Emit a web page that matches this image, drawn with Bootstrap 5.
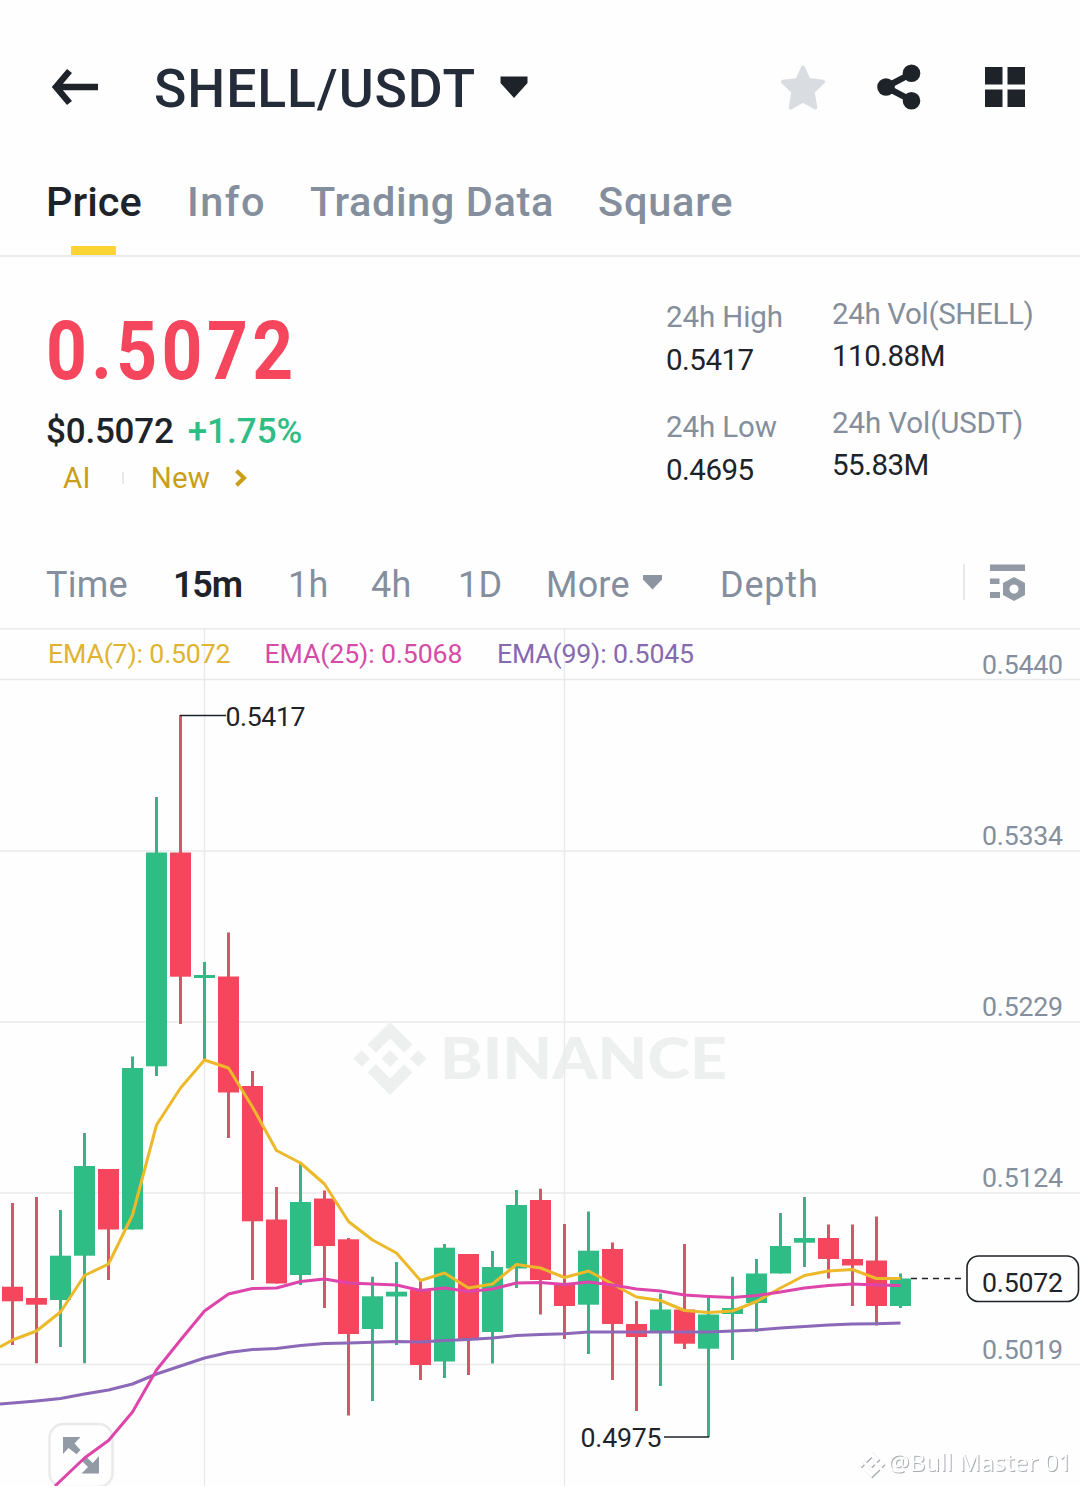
<!DOCTYPE html>
<html lang="en">
<head>
<meta charset="utf-8">
<meta name="viewport" content="width=device-width, initial-scale=1">
<title>SHELL/USDT</title>
<link href="https://cdn.jsdelivr.net/npm/bootstrap@5.3.0/dist/css/bootstrap.min.css" rel="stylesheet">
<style>
  :root { --ink:#1e2329; --muted:#848e9c; --up:#2ebd85; --down:#f6465d; --hair:#eaebec; }
  body { font-family: Roboto, "Liberation Sans", sans-serif; color:var(--ink); background:#fefefe; width:1080px; height:1486px; overflow:hidden; }
  svg { display:block; flex:none; }
  .topbar { height:144px; padding:29px 55px 0 52px; }
  .pair { font-size:53.5px; font-weight:500; line-height:64px; letter-spacing:.9px; color:#242c3a; margin-left:56px; padding-top:4px; width:346px; white-space:nowrap; }
  .tabs { height:113px; padding-left:46px; border-bottom:2px solid var(--hair); }
  .tabs .nav-link { padding:0; font-size:41.5px; line-height:60px; height:60px; margin-top:28px; color:var(--muted); position:relative; white-space:nowrap; font-weight:500; }
  .tabs .nav-link.active { color:var(--ink); }
  .tabs .nav-link.active::after { content:""; position:absolute; left:25px; top:74px; width:45px; height:9px; background:#fcd535; border-radius:1px; }
  .t-price { width:141px; letter-spacing:0 }
  .t-info { width:123px; letter-spacing:1.5px }
  .t-data { width:288px; letter-spacing:.6px }
  .t-square { letter-spacing:.8px }
  .summary { height:283px; padding:46px 0 0 46px; }
  .last-price { font-size:82px; font-weight:700; line-height:96px; color:var(--down); letter-spacing:5px; width:min-content; transform:scaleX(.87); transform-origin:0 50%; }
  .sub-price { font-size:35px; font-weight:500; line-height:48px; margin-top:9px; letter-spacing:-.2px; }
  .rise { color:var(--up); margin-left:14px; letter-spacing:0; }
  .tags { font-size:29.5px; line-height:46px; color:#c99f18; padding-left:17px; margin-top:-1px; letter-spacing:.2px; }
  .tags i { width:2px; height:12px; background:#e6e8ea; margin:0 27px 0 31px; }
  .tags svg { margin-left:24px; }
  .quotes { width:414px; font-size:29.5px; white-space:nowrap; }
  .quotes dt { font-weight:400; color:var(--muted); letter-spacing:-.1px; }
  .quotes dd { margin:0; letter-spacing:-.5px; }
  .qa { width:166px; margin-top:-7.5px; }
  .qa dt, .qa dd { line-height:43px; }
  .qa dd + dt { margin-top:24px; }
  .qb { margin-top:-10px; }
  .qb dt, .qb dd { line-height:42px; }
  .qb dd + dt { margin-top:25px; }
  .qb dt:first-child { letter-spacing:-.35px; }
  .intervals { height:88px; padding:2px 0 0 46px; font-size:36px; color:var(--muted); white-space:nowrap; letter-spacing:.2px; }
  .intervals .on { color:var(--ink); font-weight:600; letter-spacing:-1.2px; }
  .w1{width:127px}.w2{width:115px}.w3{width:83px}.w4{width:87px}.w5{width:88px}.w6{width:174px}.w7{width:243px;letter-spacing:.8px}
  .sep { width:2px; height:36px; background:#e6e8ea; margin:0 24px 6px 0; }
  .opts { margin-bottom:5px; }
  .more-caret { margin:0 0 5px 13px; }
  .kline text { font-family:Roboto, "Liberation Sans", sans-serif; font-size:26.7px; fill:var(--ink); }
  .kline .axis text { fill:var(--muted); }
  .kline .brandmark text { font-family:Lato, sans-serif; font-weight:900; font-size:57px; fill:#eef0f0; }
  .kline .byline text { font-family:"Noto Sans", sans-serif; font-size:24px; fill:#fff; }
  .byline { filter:drop-shadow(1px 1px .5px #a9adb4); }
</style>
</head>
<body>
<header class="topbar">
  <div class="d-flex align-items-center" style="height:116px">
    <svg width="46" height="38" viewBox="52 68 46 38" fill="none" stroke="#1e2329" stroke-width="6.500"><path d="M98 87H57M69.500 71L56 87L69.500 103" stroke-linejoin="miter"/></svg>
    <h1 class="pair mb-0">SHELL/USDT</h1>
    <svg width="28" height="22" viewBox="500 77 28 22" fill="#1e2329"><path d="M500.500 77.500h27v6.500L514 99L500.500 84z"/></svg>
    <div class="d-flex align-items-center ms-auto">
      <svg width="46" height="46" viewBox="780 64.500 46 46"><path d="M803 68l5.600 12.600 14.400 1.700-10.400 10.100 2.700 15.700L803 100.900l-12.300 7.200 2.700-15.700-10.400-10.100 14.400-1.700z" fill="#d9dce1" stroke="#d9dce1" stroke-width="4" stroke-linejoin="round"/></svg>
      <svg width="44" height="46" viewBox="877 64 44 46" style="margin-left:51px" fill="#1e2329"><path d="M911.500 73.500L886 87l25.500 13.500" fill="none" stroke="#1e2329" stroke-width="6.500"/><circle cx="886" cy="87" r="8.800"/><circle cx="911.500" cy="73.300" r="8.800"/><circle cx="911.500" cy="100.700" r="8.800"/></svg>
      <svg width="40" height="41" viewBox="0 0 40 41" style="margin-left:64px" fill="#1e2329"><path d="M0 0h17.500v17.500H0zM22.500 0H40v17.500H22.500zM0 22.500h17.500V40H0zM22.500 22.500H40V40H22.500z"/></svg>
    </div>
  </div>
</header>

<nav class="tabs nav flex-nowrap">
  <a class="nav-link active t-price">Price</a>
  <a class="nav-link t-info">Info</a>
  <a class="nav-link t-data">Trading Data</a>
  <a class="nav-link t-square">Square</a>
</nav>

<section class="summary d-flex justify-content-between">
  <div>
    <div class="last-price">0.5072</div>
    <div class="sub-price">$0.5072<span class="rise">+1.75%</span></div>
    <div class="tags d-flex align-items-center">AI<i></i>New
      <svg width="14" height="18" viewBox="0 0 14 18" fill="none" stroke="#c99f18" stroke-width="4"><path d="M2.500 1.800L10 9L2.500 16.200"/></svg>
    </div>
  </div>
  <div class="quotes d-flex">
    <dl class="qa mb-0"><dt>24h High</dt><dd>0.5417</dd><dt>24h Low</dt><dd>0.4695</dd></dl>
    <dl class="qb mb-0"><dt>24h Vol(SHELL)</dt><dd>110.88M</dd><dt>24h Vol(USDT)</dt><dd>55.83M</dd></dl>
  </div>
</section>

<div class="intervals d-flex align-items-center">
  <span class="w1">Time</span><span class="w2 on">15m</span><span class="w3">1h</span><span class="w4">4h</span><span class="w5">1D</span>
  <span class="w6 d-flex align-items-center">More
    <svg class="more-caret" width="19" height="15" viewBox="0 0 19 15" fill="#8c95a1"><path d="M0 0h19v4.500L9.500 14.500L0 4.500z"/></svg></span>
  <span class="w7">Depth</span>
  <span class="sep"></span>
  <svg class="opts" width="37" height="37" viewBox="0 0 37 37" fill="#929aa5"><path d="M1 .500h35v6.500H1zM1 14.500h9.500v5.500H1zM1 28h10v6H1z"/><path fill-rule="evenodd" d="M25 13l11 6v12l-11 6-11-6V19zM25 20.500a4.500 4.500 0 1 0 .010 0z"/></svg>
</div>

<svg class="kline" width="1080" height="858" viewBox="0 628 1080 858">
  <g class="brandmark" fill="#eef0f0">
    <path transform="translate(353.500 1022) scale(.577)" d="M38.730 53.200l24.590-24.580 24.600 24.600 14.300-14.310L63.320 0 24.420 38.900zM0 63.310l14.300-14.310 14.310 14.310-14.310 14.300zM38.730 73.410l24.590 24.590 24.600-24.600 14.310 14.290-38.900 38.910-38.910-38.880zM98 63.310l14.300-14.310 14.310 14.300-14.310 14.320zM77.830 63.300L63.320 48.780 48.810 63.280 63.320 77.780z"/>
    <text x="440" y="1078.500" textLength="287" lengthAdjust="spacingAndGlyphs">BINANCE</text>
  </g>
  <g stroke="#e9eaeb" stroke-width="1.500">
    <path d="M0 628.800H1080M0 679.500H1080M0 851H1080M0 1022H1080M0 1193H1080M0 1364.500H1080M204.500 629V1486M564.500 629V1486"/>
  </g>
  <rect x="49.500" y="1424" width="63" height="63" rx="14" fill="#fefefe" stroke="#e8eaec" stroke-width="2.500"/>
  <path fill="#929aa5" d="M63 1437h17.500l-6 6.500 6 6.500-4 4.300-8-6.300-5.500 6zM99 1456v17.500H81.500l6.500-6.500-5.500-5.500 3.800-4.500 6.500 6z"/>
  <g id="candles"></g>
  <g fill="none" stroke-width="3" stroke-linejoin="round">
    <polyline id="ema99" stroke="#8b68b8"/>
    <polyline id="ema7" stroke="#ecb92a"/>
    <polyline id="ema25" stroke="#dd45ab"/>
  </g>
  <g fill="none" stroke="#1e2329" stroke-width="1.600">
    <path d="M180 715.500H226M664 1437H709"/>
    <path d="M911 1278.500H966" stroke-dasharray="6 5"/>
    <rect x="967" y="1256" width="111.500" height="45.500" rx="11.500" fill="#fefefe"/>
  </g>
  <text x="225.500" y="725.800" textLength="80">0.5417</text>
  <text x="580.500" y="1446.500" textLength="81">0.4975</text>
  <text x="982" y="1291.700" textLength="81">0.5072</text>
  <g class="axis">
    <text x="982" y="674" textLength="81">0.5440</text>
    <text x="982" y="845" textLength="81">0.5334</text>
    <text x="982" y="1016" textLength="81">0.5229</text>
    <text x="982" y="1187" textLength="81">0.5124</text>
    <text x="982" y="1359" textLength="81">0.5019</text>
  </g>
  <text x="48" y="663" textLength="182.500" style="fill:#e0b430">EMA(7): 0.5072</text>
  <text x="264.500" y="663" textLength="198" style="fill:#d64aa8">EMA(25): 0.5068</text>
  <text x="497" y="663" textLength="197" style="fill:#8669b0">EMA(99): 0.5045</text>
  <g class="byline">
    <path transform="translate(858 1451) scale(.21)" fill="#fff" d="M38.730 53.200l24.590-24.580 24.600 24.600 14.300-14.310L63.320 0 24.420 38.900zM0 63.310l14.300-14.310 14.310 14.310-14.310 14.300zM38.730 73.410l24.590 24.590 24.600-24.600 14.310 14.290-38.900 38.910-38.910-38.880zM98 63.310l14.300-14.310 14.310 14.300-14.310 14.320zM77.830 63.300L63.320 48.780 48.810 63.280 63.320 77.780z"/>
    <text x="888" y="1471" textLength="184">@Bull Master 01</text>
  </g>
</svg>

<script>
// Each candle: direction, high, body top, body bottom, low
const candles = [
 ['d',1203,1286.7,1301.3,1345],['d',1197,1298,1304.7,1363.3],['u',1210,1255.7,1300,1347],['u',1133,1166,1255.7,1363.3],
 ['d',1169,1169,1229.5,1280],['u',1056.5,1068,1229.5,1229.5],['u',797,852.5,1066.3,1076],['d',715,852.5,976.7,1024],
 ['u',962,975,978,1060],['d',932.5,976.5,1092.5,1138],['d',1071,1086,1221.3,1280],['d',1187,1219.5,1283.5,1283.5],
 ['u',1162,1202,1275,1285],['d',1190.5,1198.5,1246,1308],['d',1238,1239.3,1334,1415.5],['u',1276.7,1296.3,1329,1401],
 ['u',1262,1291.7,1296.5,1345],['d',1280,1290,1365,1380],['u',1244,1247.7,1361.5,1378],['d',1254,1254,1340,1375],
 ['u',1251,1267,1332,1363.5],['u',1190,1205,1268.5,1288],['d',1188.7,1200,1280,1314.5],['d',1224,1284,1306,1339],
 ['u',1211.5,1250.7,1304.7,1354],['d',1242.5,1249,1324,1380],['d',1301,1324,1337,1411],['u',1293.5,1309.5,1332,1386],
 ['d',1244,1309.5,1343.7,1349],['u',1297,1314.5,1348.7,1437],['u',1276.7,1308,1314,1360],['u',1259,1273.5,1303,1332],
 ['u',1213,1246,1273.5,1273.5],['u',1197,1238,1242.7,1267],['d',1224.5,1238,1259,1278.5],['d',1224.5,1259,1265.5,1306],
 ['d',1216.5,1260.5,1306,1325.5],['u',1273.5,1278.5,1306,1308]];
document.getElementById('candles').innerHTML = candles.map(([k,h,t,b,l],i) => {
  const x = 2 + 24*i, up = k === 'u';
  return `<rect x="${x+9}" y="${h}" width="3" height="${l-h}" fill="${up?'#35b585':'#d9536b'}"/><rect x="${x}" y="${t}" width="21" height="${b-t}" fill="${up?'#2ebd85':'#f6465d'}"/>`;
}).join('');
// Moving averages, one value per candle, starting at the given x
const line = (id, head, x0, ys) => document.getElementById(id).setAttribute('points',
  head + ' ' + ys.map((y,i) => (x0+24*i)+','+y).join(' '));
line('ema7','0,1347',12.5,[1340,1331,1312,1275.5,1264,1215,1125,1088,1060,1068,1107,1150.5,1163,1184,1221.5,1240,1253,1280.5,1273,1288,1284,1264.5,1268,1277.5,1271,1284,1297,1300.5,1310.5,1312.5,1311,1301.5,1288,1275.5,1271,1269.5,1278.5,1278.5]);
line('ema25','55,1486',84.5,[1458,1440.5,1412,1370,1340,1311,1294,1288.5,1288,1281.5,1279,1283,1284,1285,1290.5,1288,1291.5,1289,1283,1282.5,1284.5,1282,1285,1289,1291,1295,1296.5,1297.5,1295.5,1292,1288,1285.5,1284,1285,1285.5]);
line('ema99','0,1404',12.5,[1403,1401,1398.5,1394,1390,1384,1374,1366,1358,1352.5,1349.5,1348.5,1345.5,1343.5,1343,1342.3,1341.5,1342,1340.5,1339.5,1338,1335.5,1334.5,1333.7,1332,1332,1332,1332,1332,1332,1331,1330,1328,1326.5,1325,1324,1323.7,1323]);
</script>
<script src="https://cdn.jsdelivr.net/npm/bootstrap@5.3.0/dist/js/bootstrap.bundle.min.js"></script>
</body>
</html>
